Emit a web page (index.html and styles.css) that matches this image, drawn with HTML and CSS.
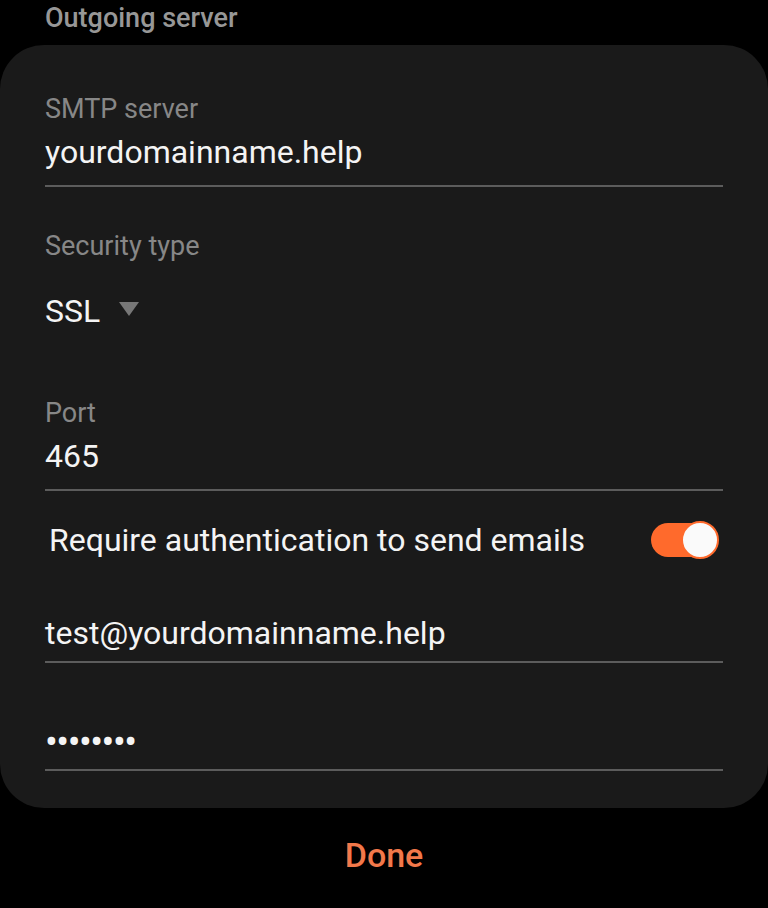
FILE: index.html
```html
<!DOCTYPE html>
<html lang="en">
<head>
    <meta charset="UTF-8">
    <meta name="viewport" content="width=device-width, initial-scale=1.0">
    <title>Outgoing server</title>
    <link rel="stylesheet" href="styles.css">
</head>
<body>
    <div class="header">Outgoing server</div>
    <div class="card">
        <div class="label">SMTP server</div>
        <div class="value">yourdomainname.help</div>
        <div class="line"></div>

        <div class="label label-security">Security type</div>
        <div class="select">
            <span class="select-value">SSL</span>
            <span class="caret"></span>
        </div>

        <div class="label label-port">Port</div>
        <div class="value">465</div>
        <div class="line"></div>

        <div class="switch-row">
            <span class="switch-text">Require authentication to send emails</span>
            <span class="switch">
                <span class="track"></span>
                <span class="thumb"></span>
            </span>
        </div>

        <div class="value value-user">test@yourdomainname.help</div>
        <div class="line line-tight"></div>

        <div class="value value-pass">••••••••</div>
        <div class="line line-pass"></div>
    </div>
    <div class="done">Done</div>
</body>
</html>
```

FILE: styles.css
```css
body {
    margin: 0;
    padding: 0;
    background-color: #000;
    font-family: Roboto, 'Noto Sans', sans-serif;
    width: 768px;
    height: 908px;
    overflow: hidden;
}
.header {
    height: 40px;
    padding: 5px 45px 0;
    font-size: 27px;
    line-height: 27px;
    font-weight: 500;
    color: #979797;
}
.card {
    background-color: #1a1a1a;
    border-radius: 44px;
    height: 763px;
    padding: 51px 45px 0;
    box-sizing: border-box;
}
.label {
    font-size: 27px;
    line-height: 27px;
    color: #878787;
}
.label-security {
    margin-top: 46px;
}
.label-port {
    margin-top: 73px;
}
.value {
    margin-top: 13px;
    font-size: 32px;
    line-height: 32px;
    color: #f4f4f4;
}
.line {
    margin-top: 17px;
    height: 2px;
    background-color: #5c5c5c;
}
.select {
    margin-top: 35px;
    display: flex;
    align-items: center;
    height: 32px;
}
.select-value {
    font-size: 32px;
    line-height: 32px;
    color: #f4f4f4;
}
.caret {
    margin-left: 19px;
    width: 0;
    height: 0;
    border-left: 10px solid transparent;
    border-right: 10px solid transparent;
    border-top: 14px solid #777;
    margin-top: -4px;
}
.switch-row {
    margin-top: 29px;
    height: 40px;
    padding: 0 4px;
    display: flex;
    align-items: center;
    justify-content: space-between;
}
.switch-text {
    font-size: 32px;
    line-height: 32px;
    color: #f4f4f4;
}
.switch {
    position: relative;
    width: 68px;
    height: 40px;
}
.track {
    position: absolute;
    left: 0;
    top: 3px;
    width: 66px;
    height: 34px;
    border-radius: 17px;
    background-color: #ff6a2c;
}
.thumb {
    position: absolute;
    right: 0;
    top: 1px;
    width: 34px;
    height: 34px;
    border-radius: 50%;
    background-color: #fafafa;
    border: 2px solid #ff6a2c;
}
.value-user {
    margin-top: 57px;
}
.line-tight {
    margin-top: 12px;
}
.value-pass {
    margin-top: 60px;
    font-size: 38px;
    line-height: 38px;
    letter-spacing: -1.5px;
}
.line-pass {
    margin-top: 8px;
}
.done {
    margin-top: 30px;
    text-align: center;
    font-size: 34px;
    line-height: 34px;
    font-weight: 500;
    color: #f2784a;
}
```
